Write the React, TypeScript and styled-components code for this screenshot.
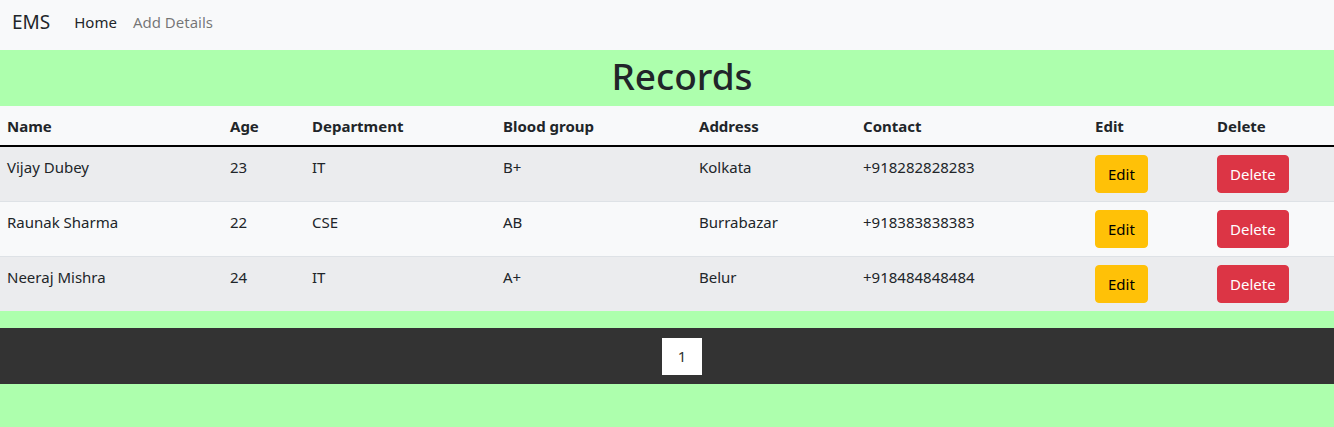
import { FC } from 'react'
import styled, { createGlobalStyle } from 'styled-components'

const GlobalStyle = createGlobalStyle`
  * { box-sizing: border-box; }
  body {
    margin: 0;
    background: #adffad;
    color: #212529;
    font-family: "Noto Sans", "Open Sans", sans-serif;
    font-size: 15px;
    line-height: 24px;
  }
`

type Employee = {
  name: string
  age: number
  department: string
  bloodGroup: string
  address: string
  contact: string
}

const employees: Employee[] = [
  { name: 'Vijay Dubey', age: 23, department: 'IT', bloodGroup: 'B+', address: 'Kolkata', contact: '+918282828283' },
  { name: 'Raunak Sharma', age: 22, department: 'CSE', bloodGroup: 'AB', address: 'Burrabazar', contact: '+918383838383' },
  { name: 'Neeraj Mishra', age: 24, department: 'IT', bloodGroup: 'A+', address: 'Belur', contact: '+918484848484' },
]

const columns = [
  { label: 'Name', width: 222 },
  { label: 'Age', width: 82 },
  { label: 'Department', width: 191 },
  { label: 'Blood group', width: 196 },
  { label: 'Address', width: 164 },
  { label: 'Contact', width: 232 },
  { label: 'Edit', width: 122 },
  { label: 'Delete', width: 125 },
]

const App: FC = () => {
  return (
    <>
      <GlobalStyle />
      <Navbar>
        <Brand>EMS</Brand>
        <NavLink active>Home</NavLink>
        <NavLink>Add Details</NavLink>
      </Navbar>
      <Title>Records</Title>
      <Table>
        <colgroup>
          {columns.map((c) => (
            <col key={c.label} style={{ width: c.width }} />
          ))}
        </colgroup>
        <thead>
          <tr>
            {columns.map((c) => (
              <Th key={c.label}>{c.label}</Th>
            ))}
          </tr>
        </thead>
        <tbody>
          {employees.map((e, i) => (
            <Row key={e.name} striped={i % 2 === 0}>
              <Td>{e.name}</Td>
              <Td>{e.age}</Td>
              <Td>{e.department}</Td>
              <Td>{e.bloodGroup}</Td>
              <Td>{e.address}</Td>
              <Td>{e.contact}</Td>
              <Td>
                <Button variant="warning">Edit</Button>
              </Td>
              <Td>
                <Button variant="danger">Delete</Button>
              </Td>
            </Row>
          ))}
        </tbody>
      </Table>
      <Footer>
        <PageItem>1</PageItem>
      </Footer>
    </>
  )
}

export default App

const Navbar = styled.nav`
  display: flex;
  align-items: center;
  height: 50px;
  padding: 0 12px 6px;
  background: #f8f9fa;
`

const Brand = styled.span`
  font-size: 19px;
  color: #212529;
  margin-right: 16px;
`

const NavLink = styled.span<{ active?: boolean }>`
  font-size: 15px;
  padding: 0 8px;
  color: ${({ active }) => (active ? '#212529' : 'rgba(0, 0, 0, 0.55)')};
`

const Title = styled.h1`
  margin: 0;
  height: 56px;
  padding-left: 30px;
  font-size: 37px;
  font-weight: 500;
  line-height: 52px;
  text-align: center;
  color: #212529;
`

const Table = styled.table`
  width: 100%;
  table-layout: fixed;
  border-collapse: collapse;
  margin-bottom: 17px;
  background: #f8f9fa;
`

const Th = styled.th`
  text-align: left;
  font-weight: 700;
  padding: 8px 7px 7px 8px;
  border-bottom: 2px solid #000;

  &:first-child {
    padding-left: 7px;
  }
`

const Row = styled.tr<{ striped: boolean }>`
  background: ${({ striped }) => (striped ? '#ebecee' : '#f8f9fa')};
  border-bottom: 1px solid #dee2e6;

  &:last-child {
    border-bottom: none;
  }
`

const Td = styled.td`
  vertical-align: top;
  padding: 8px 7px 8px 8px;
  height: 54px;

  &:first-child {
    padding-left: 7px;
  }
`

const Button = styled.button<{ variant: 'warning' | 'danger' }>`
  font-family: inherit;
  font-size: 15px;
  line-height: 24px;
  padding: 6px 12px;
  border-radius: 4px;
  border: 1px solid ${({ variant }) => (variant === 'warning' ? '#ffc107' : '#dc3545')};
  background: ${({ variant }) => (variant === 'warning' ? '#ffc107' : '#dc3545')};
  color: ${({ variant }) => (variant === 'warning' ? '#000' : '#fff')};
  cursor: pointer;
`

const Footer = styled.div`
  display: flex;
  justify-content: center;
  align-items: center;
  height: 56px;
  padding-left: 30px;
  background: #333333;
`

const PageItem = styled.div`
  width: 40px;
  height: 37px;
  display: flex;
  align-items: center;
  justify-content: center;
  background: #fff;
  color: #333;
  font-size: 15px;
`
